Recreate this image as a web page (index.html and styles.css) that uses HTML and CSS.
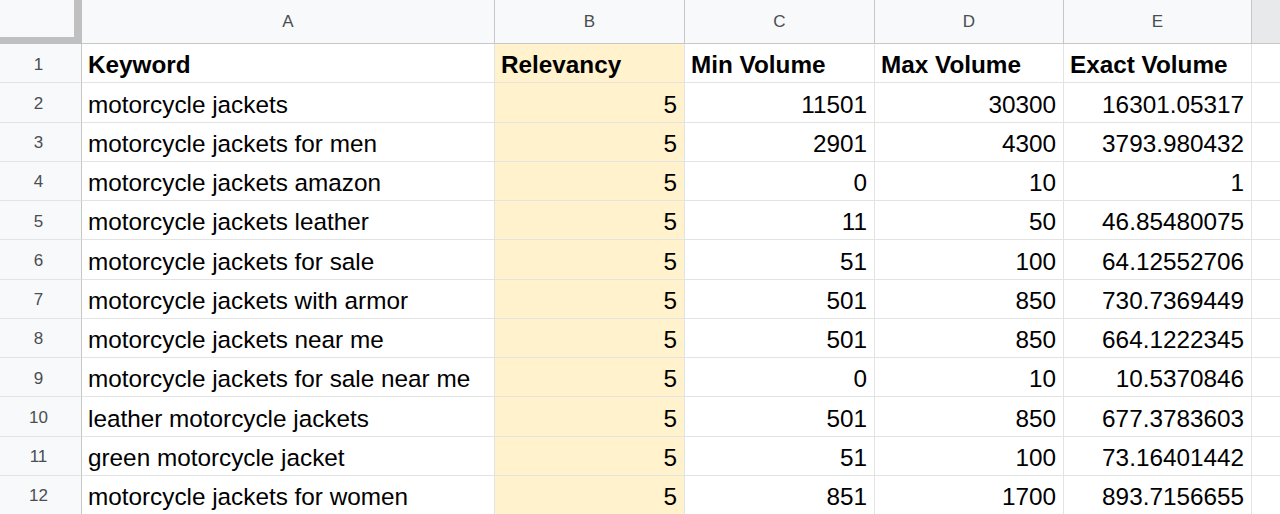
FILE: index.html
```html
<!DOCTYPE html>
<html>
<head>
<meta charset="utf-8">
<link rel="stylesheet" href="styles.css">
</head>
<body>
<div class="sheet">
  <div class="corner"></div>
  <div class="colhead">A</div>
  <div class="colhead">B</div>
  <div class="colhead">C</div>
  <div class="colhead">D</div>
  <div class="colhead">E</div>
  <div class="colhead extra"></div>

  <div class="rowhead">1</div>
  <div class="cell bold">Keyword</div>
  <div class="cell bold hl">Relevancy</div>
  <div class="cell bold">Min Volume</div>
  <div class="cell bold">Max Volume</div>
  <div class="cell bold">Exact Volume</div>
  <div class="cell"></div>

  <div class="rowhead">2</div>
  <div class="cell">motorcycle jackets</div>
  <div class="cell num hl">5</div>
  <div class="cell num">11501</div>
  <div class="cell num">30300</div>
  <div class="cell num">16301.05317</div>
  <div class="cell"></div>

  <div class="rowhead">3</div>
  <div class="cell">motorcycle jackets for men</div>
  <div class="cell num hl">5</div>
  <div class="cell num">2901</div>
  <div class="cell num">4300</div>
  <div class="cell num">3793.980432</div>
  <div class="cell"></div>

  <div class="rowhead">4</div>
  <div class="cell">motorcycle jackets amazon</div>
  <div class="cell num hl">5</div>
  <div class="cell num">0</div>
  <div class="cell num">10</div>
  <div class="cell num">1</div>
  <div class="cell"></div>

  <div class="rowhead">5</div>
  <div class="cell">motorcycle jackets leather</div>
  <div class="cell num hl">5</div>
  <div class="cell num">11</div>
  <div class="cell num">50</div>
  <div class="cell num">46.85480075</div>
  <div class="cell"></div>

  <div class="rowhead">6</div>
  <div class="cell">motorcycle jackets for sale</div>
  <div class="cell num hl">5</div>
  <div class="cell num">51</div>
  <div class="cell num">100</div>
  <div class="cell num">64.12552706</div>
  <div class="cell"></div>

  <div class="rowhead">7</div>
  <div class="cell">motorcycle jackets with armor</div>
  <div class="cell num hl">5</div>
  <div class="cell num">501</div>
  <div class="cell num">850</div>
  <div class="cell num">730.7369449</div>
  <div class="cell"></div>

  <div class="rowhead">8</div>
  <div class="cell">motorcycle jackets near me</div>
  <div class="cell num hl">5</div>
  <div class="cell num">501</div>
  <div class="cell num">850</div>
  <div class="cell num">664.1222345</div>
  <div class="cell"></div>

  <div class="rowhead">9</div>
  <div class="cell">motorcycle jackets for sale near me</div>
  <div class="cell num hl">5</div>
  <div class="cell num">0</div>
  <div class="cell num">10</div>
  <div class="cell num">10.5370846</div>
  <div class="cell"></div>

  <div class="rowhead">10</div>
  <div class="cell">leather motorcycle jackets</div>
  <div class="cell num hl">5</div>
  <div class="cell num">501</div>
  <div class="cell num">850</div>
  <div class="cell num">677.3783603</div>
  <div class="cell"></div>

  <div class="rowhead">11</div>
  <div class="cell">green motorcycle jacket</div>
  <div class="cell num hl">5</div>
  <div class="cell num">51</div>
  <div class="cell num">100</div>
  <div class="cell num">73.16401442</div>
  <div class="cell"></div>

  <div class="rowhead">12</div>
  <div class="cell">motorcycle jackets for women</div>
  <div class="cell num hl">5</div>
  <div class="cell num">851</div>
  <div class="cell num">1700</div>
  <div class="cell num">893.7156655</div>
  <div class="cell"></div>
</div>
</body>
</html>
```

FILE: styles.css
```css
html, body {
  margin: 0;
  padding: 0;
  background: #ffffff;
  overflow: hidden;
}

.sheet {
  display: grid;
  grid-template-columns: 82px 413px 190px 190px 189px 188px 40px;
  grid-template-rows: 44px repeat(12, 39.25px);
  width: 1292px;
  font-family: "Liberation Sans", Arial, sans-serif;
}

.corner {
  box-sizing: border-box;
  background: #f8f9fa;
  border-right: 8px solid #c0c0c0;
  border-bottom: 7px solid #c0c0c0;
}

.colhead {
  box-sizing: border-box;
  background: #f8f9fa;
  border-right: 1px solid #c7c7c7;
  border-bottom: 1px solid #c7c7c7;
  display: flex;
  align-items: center;
  justify-content: center;
  color: #4a4d52;
  font-size: 17px;
  padding-top: 1px;
}

.colhead.extra {
  background: #e8e9eb;
  border-right: none;
}

.rowhead {
  box-sizing: border-box;
  background: #f8f9fa;
  border-right: 1px solid #c7c7c7;
  border-bottom: 1px solid #e2e3e3;
  display: flex;
  align-items: center;
  justify-content: center;
  color: #4a4d52;
  font-size: 17px;
  padding-top: 3px;
  padding-right: 4px;
}

.cell {
  box-sizing: border-box;
  border-right: 1px solid #e2e3e3;
  border-bottom: 1px solid #e2e3e3;
  display: flex;
  align-items: flex-end;
  padding: 0 7px 4px 6px;
  font-size: 24.3px;
  color: #000000;
  white-space: nowrap;
  overflow: hidden;
  line-height: 27px;
}

.cell.bold {
  font-weight: bold;
}

.cell.num {
  justify-content: flex-end;
}

.cell.hl {
  background: #fff2cc;
}
```
